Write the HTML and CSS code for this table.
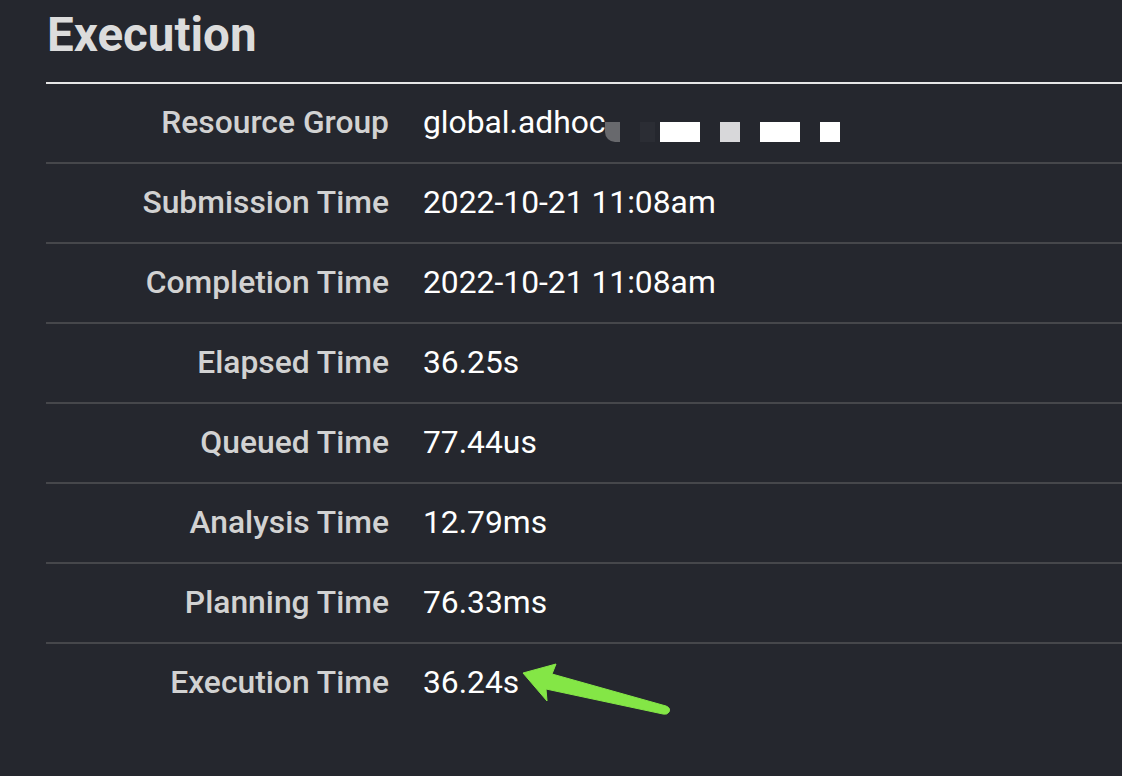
FILE: index.html
```html
<!DOCTYPE html>
<html>
<head>
<meta charset="utf-8">
<link rel="stylesheet" href="styles.css">
</head>
<body>
<div class="page">
  <h1 class="title">Execution</h1>
  <div class="table">
    <div class="row">
      <div class="label">Resource Group</div>
      <div class="value">global.adhoc<span class="redact"><span class="r r1"></span><span class="r r2"></span><span class="r r3"></span><span class="r r4"></span><span class="r r5"></span><span class="r r6"></span></span></div>
    </div>
    <div class="row"><div class="label">Submission Time</div><div class="value">2022-10-21 11:08am</div></div>
    <div class="row"><div class="label">Completion Time</div><div class="value">2022-10-21 11:08am</div></div>
    <div class="row"><div class="label">Elapsed Time</div><div class="value">36.25s</div></div>
    <div class="row"><div class="label">Queued Time</div><div class="value">77.44us</div></div>
    <div class="row"><div class="label">Analysis Time</div><div class="value">12.79ms</div></div>
    <div class="row"><div class="label">Planning Time</div><div class="value">76.33ms</div></div>
    <div class="row last"><div class="label">Execution Time</div><div class="value">36.24s</div></div>
  </div>
  <svg class="arrow" width="1122" height="776" viewBox="0 0 1122 776">
    <path d="M523 673 L556 664 L552 674 L666 706 Q671 708 669 712 Q667 715 663 714 L546 689 L547 701 Z" fill="#84e646" stroke="#84e646" stroke-width="1" stroke-linejoin="round"/>
  </svg>
</div>
</body>
</html>
```

FILE: styles.css
```css
html, body {
  margin: 0;
  padding: 0;
  background: #25272e;
}
.page {
  position: relative;
  width: 1122px;
  height: 776px;
  overflow: hidden;
  padding-left: 46px;
  box-sizing: border-box;
  font-family: Roboto, "Liberation Sans", sans-serif;
}
.title {
  margin: 0;
  padding: 7px 0 19px 1px;
  font-size: 47.5px;
  line-height: 56px;
  font-weight: 700;
  color: #dcdcdc;
  border-bottom: 2px solid #e6e6e6;
}
.row {
  display: grid;
  grid-template-columns: 343px 1fr;
  column-gap: 34px;
  align-items: center;
  height: 78px;
  border-bottom: 2px solid #46474b;
}
.row.last {
  border-bottom: none;
}
.label, .value {
  font-size: 31.8px;
  line-height: 40px;
  margin-top: -2px;
}
.label {
  text-align: right;
  font-weight: 500;
  color: #d2d2d2;
}
.value {
  font-weight: 400;
  color: #ffffff;
  white-space: nowrap;
}
.redact {
  display: inline-flex;
  vertical-align: -9px;
  height: 20px;
}
.r {
  display: inline-block;
  height: 20px;
}
.r1 { width: 15px; margin-left: -1px; background: #68696d; border-bottom-left-radius: 10px; }
.r2 { width: 15px; margin-left: 20px; background: #2b2d34; }
.r3 { width: 40px; margin-left: 5px; background: #ffffff; }
.r4 { width: 20px; margin-left: 20px; background: #d8d8da; }
.r5 { width: 40px; margin-left: 20px; background: #ffffff; }
.r6 { width: 20px; margin-left: 20px; background: #ffffff; }
.arrow {
  position: absolute;
  left: 0;
  top: 0;
  pointer-events: none;
}
```
